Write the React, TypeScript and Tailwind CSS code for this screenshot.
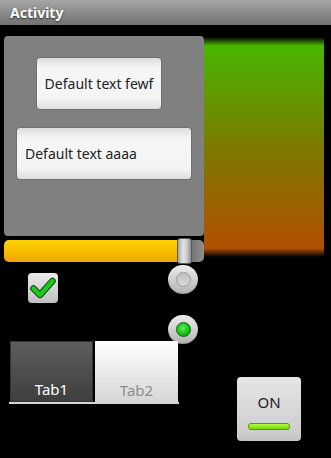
const font = { fontFamily: '"Noto Sans", "Open Sans", sans-serif' };

function Radio({ checked }: { checked?: boolean }) {
  return (
    <div className="flex h-[29px] w-[30px] items-center justify-center rounded-full bg-[linear-gradient(180deg,#ececec,#b4b4b4)] shadow-[inset_0_-1px_1px_rgba(0,0,0,0.2)]">
      {checked ? (
        <div className="h-[15px] w-[15px] rounded-full border border-[#0a6a0a] bg-[radial-gradient(circle_at_45%_40%,#5cf05c,#18c018_55%,#0c8c0c)]" />
      ) : (
        <div className="h-[15px] w-[15px] rounded-full border border-[#9a9a9a] bg-[linear-gradient(180deg,#c0c0c0,#d8d8d8)]" />
      )}
    </div>
  );
}

export default function App() {
  return (
    <div className="relative h-[458px] w-[331px] overflow-hidden bg-black" style={font}>
      <div className="flex h-[25px] items-center bg-[linear-gradient(180deg,#a6a6a6,#727272)] pl-[10px]">
        <span className="text-[14px] font-bold text-white [text-shadow:0_1px_2px_rgba(0,0,0,0.7)]">Activity</span>
      </div>

      <div className="mt-[11px] flex items-start">
        <div className="ml-[4px] w-[200px]">
          <div className="relative h-[200px] rounded-[4px] bg-[#808080]">
            <div className="absolute left-[32px] top-[21px] flex h-[53px] w-[126px] items-center justify-center rounded-[4px] border border-[#707070] bg-[linear-gradient(180deg,#dcdcdc,#f6f6f6_20%,#f4f4f4_80%,#dedede)] text-[14px] text-[#222]">
              Default text fewf
            </div>
            <div className="absolute left-[12px] top-[91px] flex h-[53px] w-[176px] items-center rounded-[4px] border border-[#707070] bg-[linear-gradient(180deg,#dcdcdc,#f6f6f6_20%,#f4f4f4_80%,#dedede)] pl-[8px] text-[14px] text-[#222]">
              Default text aaaa
            </div>
          </div>

          <div className="relative mt-[4px] flex h-[22px]">
            <div className="h-full w-[176px] rounded-l-[5px] bg-[linear-gradient(180deg,#ffd400,#f6b800_60%,#f0a800)]" />
            <div className="h-full flex-1 rounded-r-[5px] bg-[linear-gradient(90deg,#5a5a5a,#909090)]" />
            <div className="absolute left-[173px] top-[-2px] h-[26px] w-[15px] rounded-[3px] border border-[#5a5a5a] bg-[linear-gradient(90deg,#a8a8a8,#e4e4e4_40%,#c8c8c8_70%,#8a8a8a)]" />
          </div>

          <div className="flex items-start justify-between">
            <div className="ml-[24px] mt-[11px] flex h-[30px] w-[30px] items-center justify-center rounded-[4px] bg-[linear-gradient(180deg,#ececec,#c0c0c0)]">
              <svg width="26" height="22" viewBox="0 0 26 22">
                <path d="M3.5 11.5 L10 18 L22.5 4" fill="none" stroke="#0a4a0a" strokeWidth="6.5" strokeLinecap="round" strokeLinejoin="round" />
                <path d="M3.5 11.5 L10 18 L22.5 4" fill="none" stroke="#1ec81e" strokeWidth="4.5" strokeLinecap="round" strokeLinejoin="round" />
              </svg>
            </div>
            <div className="mr-[6px] mt-[3px] flex flex-col gap-[21px]">
              <Radio />
              <Radio checked />
            </div>
          </div>
        </div>

        <div className="h-[220px] w-[120px] translate-y-[1px] bg-[linear-gradient(180deg,#000_0%,#48b600_4%,#7c7a00_50%,#b25000_96%,#000_100%)]" />
      </div>

      <div className="-mt-[3px] flex items-start pl-[9px]">
        <div className="w-[170px]">
          <div className="flex gap-[2px] px-[1px]">
            <div className="flex h-[61px] w-[83px] items-end justify-center border border-[#333] bg-[linear-gradient(180deg,#5e5e5e,#3e3e3e)] pb-[1px] text-[15px] text-white">
              Tab1
            </div>
            <div className="flex h-[61px] w-[83px] items-end justify-center bg-[linear-gradient(180deg,#ffffff,#d6d6d6)] pb-[1px] text-[15px] text-[#8c8c8c]">
              Tab2
            </div>
          </div>
          <div className="h-[2px] bg-[#d4d4d4]" />
        </div>

        <div className="ml-[58px] mt-[36px] flex h-[64px] w-[64px] flex-col items-center rounded-[4px] bg-[linear-gradient(180deg,#e6e6e6,#cecece_85%,#c4c4c4)]">
          <span className="mt-[16px] text-[15px] leading-[18px] text-[#222]">ON</span>
          <div className="mt-[12px] h-[7px] w-[42px] rounded-[3px] border border-[#5a9a00] bg-[linear-gradient(180deg,#b0ff40,#78d800)]" />
        </div>
      </div>
    </div>
  );
}
